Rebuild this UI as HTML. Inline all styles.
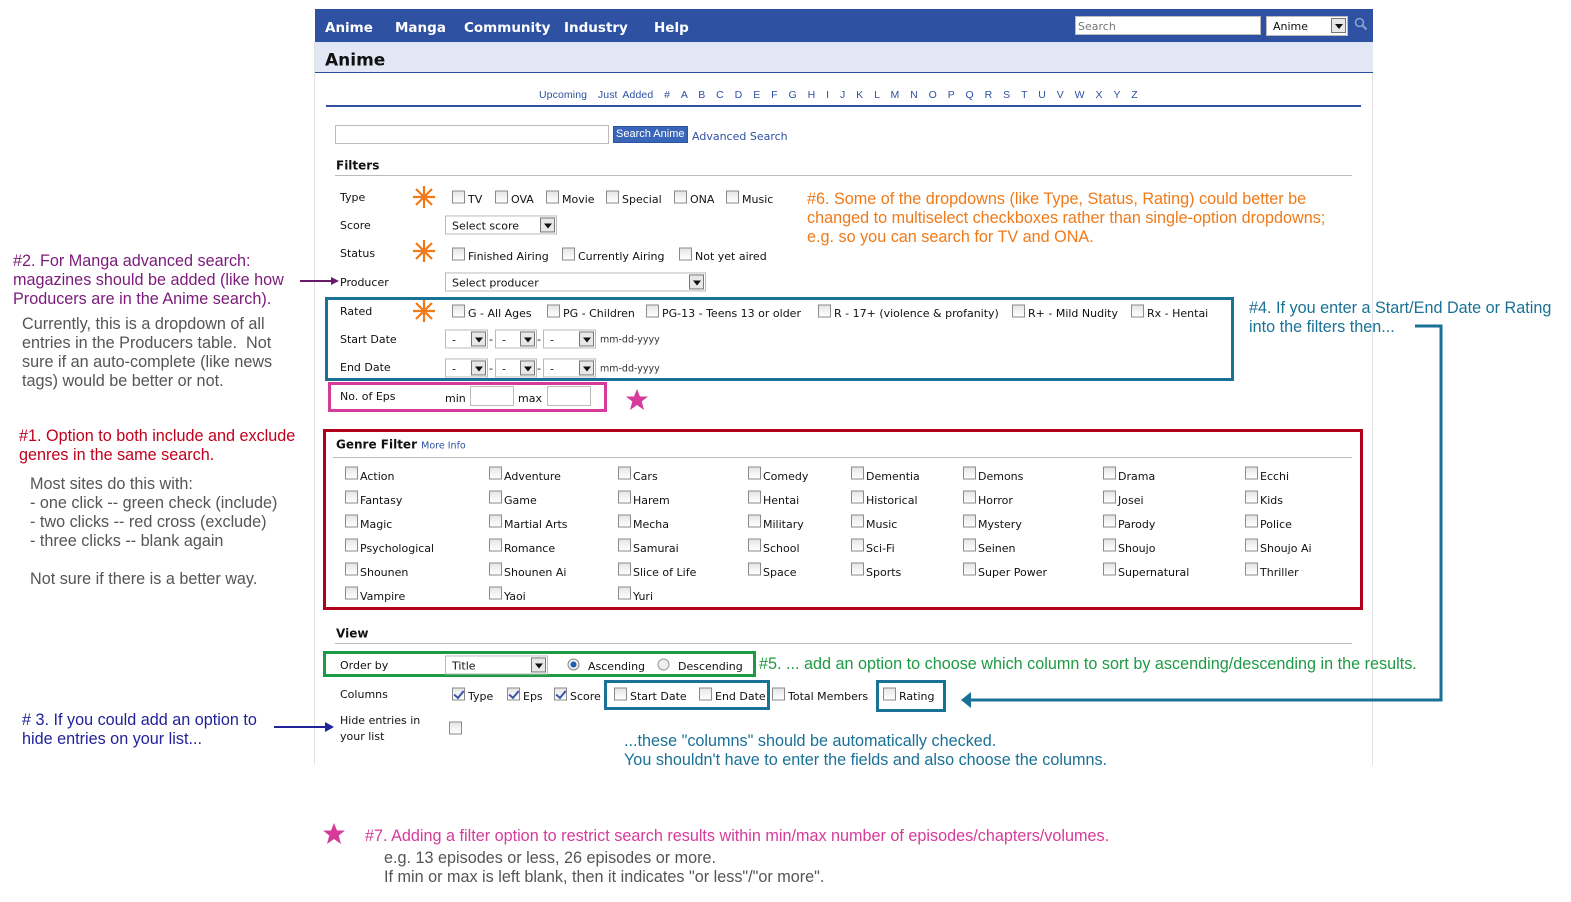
<!DOCTYPE html>
<html><head><meta charset="utf-8"><style>
*{margin:0;padding:0;box-sizing:border-box}
body{width:1571px;height:902px;background:#fff;position:relative;overflow:hidden;font-family:"DejaVu Sans","Liberation Sans",sans-serif;font-size:11px;color:#111}
.a{position:absolute;white-space:nowrap}
.t{position:absolute;white-space:nowrap;transform:translateY(-38%);line-height:1}
.n{font-family:"Liberation Sans",sans-serif;font-size:16.2px;line-height:19px;position:absolute;white-space:nowrap;margin-top:1px}
.cb{position:absolute;width:13px;height:13px;border:1px solid #8a8a8a;background:linear-gradient(#e6e6e6,#fff);transform:translateY(-50%)}
.cb.c::after{content:"";position:absolute;left:3px;top:0px;width:4px;height:8px;border:solid #3a52a8;border-width:0 2px 2px 0;transform:rotate(40deg)}
.sel{position:absolute;height:19px;border:1px solid #bbb;background:#fff;transform:translateY(-45%)}
.sel span{position:absolute;left:6px;top:3px;font-size:11px}
.sel i{position:absolute;right:1px;top:1px;width:15px;height:15px;border:1px solid #777;background:#e8e8e8}
.sel i::after{content:"";position:absolute;left:3px;top:5px;border:4px solid transparent;border-top:5px solid #111}
.inp{position:absolute;border:1px solid #bbb;background:#fff}
.box{position:absolute;border:3px solid}
</style></head><body>
<div class="a" style="left:314px;top:42px;width:1px;height:723px;background:#e2e2e2"></div>
<div class="a" style="left:1372px;top:42px;width:1px;height:723px;background:#e2e2e2"></div>
<div class="a" style="left:315px;top:9px;width:1058px;height:33px;background:#2e51a2"></div>
<div class="t" style="left:325px;top:27px;color:#fff;font-weight:bold;font-size:13.5px">Anime</div>
<div class="t" style="left:395px;top:27px;color:#fff;font-weight:bold;font-size:13.5px">Manga</div>
<div class="t" style="left:464px;top:27px;color:#fff;font-weight:bold;font-size:13.5px">Community</div>
<div class="t" style="left:564px;top:27px;color:#fff;font-weight:bold;font-size:13.5px">Industry</div>
<div class="t" style="left:654px;top:27px;color:#fff;font-weight:bold;font-size:13.5px">Help</div>
<div class="inp" style="left:1075px;top:16px;width:186px;height:19px"><span class="a" style="left:2px;top:3px;color:#777;font-size:11px">Search</span></div>
<div class="sel" style="left:1266px;top:26px;width:82px;height:20px;transform:translateY(-50%)"><span>Anime</span><i></i></div>
<svg class="a" style="left:1354px;top:17px" width="14" height="14"><circle cx="5.5" cy="5.5" r="4" fill="none" stroke="#8aa0d0" stroke-width="1.6"/><line x1="8.5" y1="8.5" x2="12.5" y2="12.5" stroke="#8aa0d0" stroke-width="2"/></svg>
<div class="a" style="left:315px;top:42px;width:1058px;height:31px;background:#e1e7f5;border-bottom:1px solid #2e51a2"></div>
<div class="t" style="left:325px;top:59px;font-weight:bold;font-size:17px">Anime</div>
<div class="t" style="left:539px;top:94px;color:#2e51a2;font-size:10.5px;font-family:'Liberation Sans',sans-serif;word-spacing:2.4px;letter-spacing:.1px">Upcoming&nbsp; Just Added&nbsp; # &nbsp;A &nbsp;B &nbsp;C &nbsp;D &nbsp;E &nbsp;F &nbsp;G &nbsp;H &nbsp;I &nbsp;J &nbsp;K &nbsp;L &nbsp;M &nbsp;N &nbsp;O &nbsp;P &nbsp;Q &nbsp;R &nbsp;S &nbsp;T &nbsp;U &nbsp;V &nbsp;W &nbsp;X &nbsp;Y &nbsp;Z</div>
<div class="a" style="left:326px;top:105px;width:1035px;height:2px;background:#2e51a2"></div>
<div class="inp" style="left:335px;top:125px;width:274px;height:19px"></div>
<div class="a" style="left:613px;top:126px;width:75px;height:17px;background:#3a66b8;border:1px solid #2e51a2;color:#fff;font-size:11px;line-height:15px;padding-left:2px;font-family:'Liberation Sans',sans-serif">Search Anime</div>
<div class="t" style="left:692px;top:135px;color:#2e51a2;font-size:11px">Advanced Search</div>
<div class="t" style="left:336px;top:164px;font-weight:bold;font-size:12px">Filters</div>
<div class="a" style="left:335px;top:175px;width:1017px;height:1px;background:#bbb"></div>
<div class="t" style="left:340px;top:196px">Type</div>
<div class="t" style="left:340px;top:224px">Score</div>
<div class="t" style="left:340px;top:252px">Status</div>
<div class="t" style="left:340px;top:281px">Producer</div>
<div class="t" style="left:340px;top:310px">Rated</div>
<div class="t" style="left:340px;top:338px">Start Date</div>
<div class="t" style="left:340px;top:366px">End Date</div>
<div class="t" style="left:340px;top:395px">No. of Eps</div>
<div class="cb" style="left:452px;top:197px"></div><div class="t" style="left:468px;top:198px">TV</div>
<div class="cb" style="left:495px;top:197px"></div><div class="t" style="left:511px;top:198px">OVA</div>
<div class="cb" style="left:546px;top:197px"></div><div class="t" style="left:562px;top:198px">Movie</div>
<div class="cb" style="left:606px;top:197px"></div><div class="t" style="left:622px;top:198px">Special</div>
<div class="cb" style="left:674px;top:197px"></div><div class="t" style="left:690px;top:198px">ONA</div>
<div class="cb" style="left:726px;top:197px"></div><div class="t" style="left:742px;top:198px">Music</div>
<div class="sel" style="left:445px;top:224px;width:112px"><span>Select score</span><i></i></div>
<div class="cb" style="left:452px;top:254px"></div><div class="t" style="left:468px;top:255px">Finished Airing</div>
<div class="cb" style="left:562px;top:254px"></div><div class="t" style="left:578px;top:255px">Currently Airing</div>
<div class="cb" style="left:679px;top:254px"></div><div class="t" style="left:695px;top:255px">Not yet aired</div>
<div class="sel" style="left:445px;top:281px;width:261px"><span>Select producer</span><i></i></div>
<div class="cb" style="left:452px;top:311px"></div><div class="t" style="left:468px;top:312px">G - All Ages</div>
<div class="cb" style="left:547px;top:311px"></div><div class="t" style="left:563px;top:312px">PG - Children</div>
<div class="cb" style="left:646px;top:311px"></div><div class="t" style="left:662px;top:312px">PG-13 - Teens 13 or older</div>
<div class="cb" style="left:818px;top:311px"></div><div class="t" style="left:834px;top:312px">R - 17+ (violence &amp; profanity)</div>
<div class="cb" style="left:1012px;top:311px"></div><div class="t" style="left:1028px;top:312px">R+ - Mild Nudity</div>
<div class="cb" style="left:1131px;top:311px"></div><div class="t" style="left:1147px;top:312px">Rx - Hentai</div>
<div class="sel" style="left:445px;top:338px;width:43px"><span>-</span><i></i></div><div class="t" style="left:489px;top:338px">-</div>
<div class="sel" style="left:495px;top:338px;width:42px"><span>-</span><i></i></div><div class="t" style="left:537px;top:338px">-</div>
<div class="sel" style="left:543px;top:338px;width:53px"><span>-</span><i></i></div><div class="t" style="left:600px;top:339px;font-size:9.5px;color:#333">mm-dd-yyyy</div>
<div class="sel" style="left:445px;top:367px;width:43px"><span>-</span><i></i></div><div class="t" style="left:489px;top:367px">-</div>
<div class="sel" style="left:495px;top:367px;width:42px"><span>-</span><i></i></div><div class="t" style="left:537px;top:367px">-</div>
<div class="sel" style="left:543px;top:367px;width:53px"><span>-</span><i></i></div><div class="t" style="left:600px;top:368px;font-size:9.5px;color:#333">mm-dd-yyyy</div>
<div class="t" style="left:445px;top:397px">min</div><div class="inp" style="left:470px;top:386px;width:44px;height:20px"></div>
<div class="t" style="left:518px;top:397px">max</div><div class="inp" style="left:547px;top:386px;width:44px;height:20px"></div>
<div class="box" style="left:325px;top:297px;width:909px;height:84px;border-color:#1a7196"></div>
<div class="box" style="left:328px;top:382px;width:279px;height:30px;border-color:#d63a9a"></div>
<div class="box" style="left:323px;top:429px;width:1040px;height:181px;border-color:#b0001c"></div>
<div class="box" style="left:323px;top:651px;width:433px;height:26px;border-color:#1e9a45"></div>
<div class="box" style="left:604px;top:680px;width:166px;height:30px;border-color:#1a7196"></div>
<div class="box" style="left:876px;top:680px;width:70px;height:32px;border-color:#1a7196"></div>
<div class="t" style="left:336px;top:443px;font-weight:bold;font-size:12px">Genre Filter <span style="font-weight:normal;font-size:9.5px;color:#2e51a2">More Info</span></div>
<div class="a" style="left:333px;top:457px;width:1019px;height:1px;background:#bbb"></div>
<div id="g"></div>
<div class="t" style="left:336px;top:632px;font-weight:bold;font-size:12px">View</div>
<div class="a" style="left:335px;top:643px;width:1017px;height:1px;background:#bbb"></div>
<div class="t" style="left:340px;top:664px">Order by</div>
<div class="sel" style="left:445px;top:664px;width:103px"><span>Title</span><i></i></div>
<svg class="a" style="left:567px;top:658px" width="13" height="13"><circle cx="6.5" cy="6.5" r="5.5" fill="#eee" stroke="#888"/><circle cx="6.5" cy="6.5" r="3" fill="#1a5fb0"/></svg>
<div class="t" style="left:588px;top:665px">Ascending</div>
<svg class="a" style="left:657px;top:658px" width="13" height="13"><circle cx="6.5" cy="6.5" r="5.5" fill="#eee" stroke="#999"/></svg>
<div class="t" style="left:678px;top:665px">Descending</div>
<div class="t" style="left:340px;top:693px">Columns</div>
<div class="cb c" style="left:452px;top:694px"></div><div class="t" style="left:468px;top:695px">Type</div>
<div class="cb c" style="left:507px;top:694px"></div><div class="t" style="left:523px;top:695px">Eps</div>
<div class="cb c" style="left:554px;top:694px"></div><div class="t" style="left:570px;top:695px">Score</div>
<div class="cb" style="left:614px;top:694px"></div><div class="t" style="left:630px;top:695px">Start Date</div>
<div class="cb" style="left:699px;top:694px"></div><div class="t" style="left:715px;top:695px">End Date</div>
<div class="cb" style="left:772px;top:694px"></div><div class="t" style="left:788px;top:695px">Total Members</div>
<div class="cb" style="left:883px;top:694px"></div><div class="t" style="left:899px;top:695px">Rating</div>
<div class="t" style="left:340px;top:719px">Hide entries in</div>
<div class="t" style="left:340px;top:735px">your list</div>
<div class="cb" style="left:449px;top:728px"></div>
<svg class="a" style="left:0;top:0" width="1571" height="902">
<g stroke="#f07a18" stroke-width="2.2">
<g transform="translate(424,197)"><line x1="-11" y1="0" x2="11" y2="0"/><line x1="0" y1="-11" x2="0" y2="11"/><line x1="-8" y1="-8" x2="8" y2="8"/><line x1="-8" y1="8" x2="8" y2="-8"/></g>
<g transform="translate(424,251)"><line x1="-11" y1="0" x2="11" y2="0"/><line x1="0" y1="-11" x2="0" y2="11"/><line x1="-8" y1="-8" x2="8" y2="8"/><line x1="-8" y1="8" x2="8" y2="-8"/></g>
<g transform="translate(424,311)"><line x1="-11" y1="0" x2="11" y2="0"/><line x1="0" y1="-11" x2="0" y2="11"/><line x1="-8" y1="-8" x2="8" y2="8"/><line x1="-8" y1="8" x2="8" y2="-8"/></g>
</g>
<polygon fill="#d63a9a" transform="translate(637,400)" points="0,-11 3,-3.5 11,-3.5 4.7,1.5 7,10 0,5 -7,10 -4.7,1.5 -11,-3.5 -3,-3.5"/>
<polygon fill="#d63a9a" transform="translate(334,834)" points="0,-11 3,-3.5 11,-3.5 4.7,1.5 7,10 0,5 -7,10 -4.7,1.5 -11,-3.5 -3,-3.5"/>
<line x1="300" y1="281" x2="332" y2="281" stroke="#6a1a6a" stroke-width="2"/><polygon points="339,281 331,277 331,285" fill="#6a1a6a"/>
<line x1="274" y1="727" x2="326" y2="727" stroke="#22229a" stroke-width="2"/><polygon points="334,727 325,722 325,732" fill="#22229a"/>
<polyline points="1415,326 1441,326 1441,700 970,700" fill="none" stroke="#1a7196" stroke-width="3"/>
<polygon points="961,700 971,692 971,708" fill="#1a7196"/>
</svg>
<div class="n" style="left:807px;top:189px;color:#f07a18">#6. Some of the dropdowns (like Type, Status, Rating) could better be<br>changed to multiselect checkboxes rather than single-option dropdowns;<br>e.g. so you can search for TV and ONA.</div>
<div class="n" style="left:13px;top:251px;color:#7b1a7b">#2. For Manga advanced search:<br>magazines should be added (like how<br>Producers are in the Anime search).</div>
<div class="n" style="left:22px;top:314px;color:#555">Currently, this is a dropdown of all<br>entries in the Producers table.&nbsp; Not<br>sure if an auto-complete (like news<br>tags) would be better or not.</div>
<div class="n" style="left:19px;top:426px;color:#c0001c">#1. Option to both include and exclude<br>genres in the same search.</div>
<div class="n" style="left:30px;top:474px;color:#555">Most sites do this with:<br>- one click -- green check (include)<br>- two clicks -- red cross (exclude)<br>- three clicks -- blank again<br><br>Not sure if there is a better way.</div>
<div class="n" style="left:22px;top:710px;color:#22229a"># 3. If you could add an option to<br>hide entries on your list...</div>
<div class="n" style="left:1249px;top:298px;color:#1a7196">#4. If you enter a Start/End Date or Rating<br>into the filters then...</div>
<div class="n" style="left:759px;top:654px;color:#1e9a45">#5. ... add an option to choose which column to sort by ascending/descending in the results.</div>
<div class="n" style="left:624px;top:731px;color:#1a7196">...these "columns" should be automatically checked.<br>You shouldn't have to enter the fields and also choose the columns.</div>
<div class="n" style="left:365px;top:826px;color:#d63a9a">#7. Adding a filter option to restrict search results within min/max number of episodes/chapters/volumes.</div>
<div class="n" style="left:384px;top:848px;color:#555">e.g. 13 episodes or less, 26 episodes or more.<br>If min or max is left blank, then it indicates "or less"/"or more".</div>
<script>
var cols=[345,489,618,748,851,963,1103,1245],rows=[474,498,522,546,570,594];
var g=[["Action","Adventure","Cars","Comedy","Dementia","Demons","Drama","Ecchi"],["Fantasy","Game","Harem","Hentai","Historical","Horror","Josei","Kids"],["Magic","Martial Arts","Mecha","Military","Music","Mystery","Parody","Police"],["Psychological","Romance","Samurai","School","Sci-Fi","Seinen","Shoujo","Shoujo Ai"],["Shounen","Shounen Ai","Slice of Life","Space","Sports","Super Power","Supernatural","Thriller"],["Vampire","Yaoi","Yuri"]];
var h="";g.forEach(function(r,i){r.forEach(function(n,j){h+='<div class="cb" style="left:'+cols[j]+'px;top:'+(rows[i]-1)+'px"></div><div class="t" style="left:'+(cols[j]+15)+'px;top:'+(rows[i]+1)+'px">'+n+'</div>';});});
document.getElementById("g").innerHTML=h;
</script>
</body></html>
